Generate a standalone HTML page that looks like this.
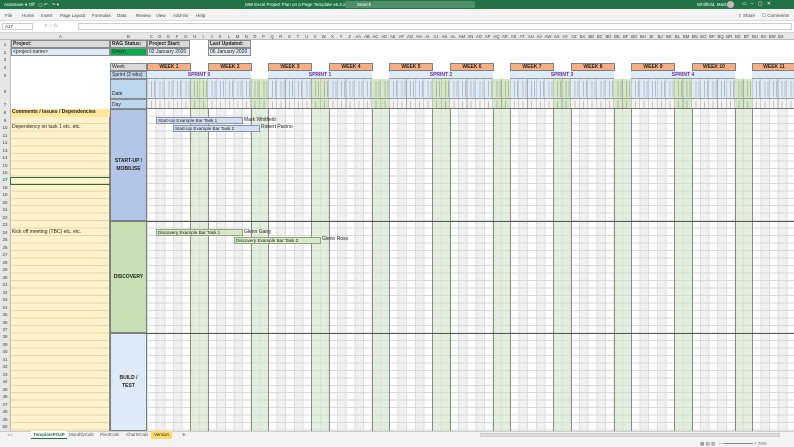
<!DOCTYPE html><html><head><style>
*{margin:0;padding:0;box-sizing:border-box}
body{width:794px;height:447px;overflow:hidden;background:#fff;font-family:"Liberation Sans",sans-serif;position:relative;font-size:5px;color:#222}
.a{position:absolute}
.title{left:0;top:0;width:794px;height:9px;background:#217346;color:#fff}
.menu{left:0;top:9px;width:794px;height:12px;background:#f3f3f3;border-bottom:1px solid #ddd}
.menu span{position:absolute;top:4px;font-size:4.5px;color:#444}
.fb{left:0;top:21px;width:794px;height:12px;background:#fff;border-bottom:1px solid #d4d4d4}
.colh{left:0;top:33px;width:794px;height:7px;background:#e6e6e6;border-bottom:1px solid #bbb}
.colh span{position:absolute;top:1px;font-size:4.5px;color:#444;text-align:center}
.rowh{left:0;top:40px;width:11px;height:391px;background:#e6e6e6;border-right:1px solid #bbb}
.rowh span{position:absolute;left:0;width:10px;text-align:center;font-size:4.5px;color:#444}
.grid{left:147px;top:109px;width:647px;height:322px;
background:
repeating-linear-gradient(180deg,transparent 0 6.48px,#d9d9d9 6.48px 7.48px),
repeating-linear-gradient(90deg,#dcdcdc 0 1px,transparent 1px 8.64px),
repeating-linear-gradient(90deg,#fff 0 8.64px,#f1f1f1 8.64px 17.28px,#fff 17.28px 25.92px,#f1f1f1 25.92px 34.56px,#fff 34.56px 43.2px,#e2efda 43.2px 60.48px)}
.wkline{top:109px;width:1px;height:322px;background:#8a8a8a}
.cell{font-size:5px;line-height:7px;padding-left:1px;white-space:nowrap;overflow:hidden}
.week{height:8px;background:#f4b084;border:1px solid #7f7f7f;font-weight:bold;font-size:5px;text-align:center;line-height:7px}
.spr{top:71px;height:8px;background:#ddebf7;color:#7030a0;font-weight:bold;font-size:5px;text-align:center;line-height:8px;border-bottom:1px solid #999}
.bar{height:7px;border:1px solid #8497b0;font-size:4.6px;line-height:5px;padding-left:1px;white-space:nowrap}
.sec{left:110px;width:37px;border:1px solid #7f7f7f;font-weight:bold;font-size:5px;text-align:center;display:flex;align-items:center;justify-content:center;line-height:8px}
</style></head><body>
<div class="a title"><span class="a" style="left:4px;top:2px;font-size:4.5px">AutoSave ● Off &nbsp; ▢ ↶ · ↷ ▾</span><span class="a" style="left:245px;top:2px;font-size:4.5px">MW Excel Project Plan on a Page Template v6.2.xlsm - Excel</span><span class="a" style="left:345px;top:1px;width:130px;height:7px;background:#4f8f69;border-radius:1px;font-size:4.5px;padding-left:12px;line-height:7px">Search</span><span class="a" style="left:697px;top:2px;font-size:4.5px">Whitfield, Mark</span><span class="a" style="left:727px;top:1px;width:7px;height:7px;border-radius:50%;background:#c9b6c0"></span><span class="a" style="left:742px;top:1px;font-size:5px">▭ &nbsp; – &nbsp; ▢ &nbsp; ✕</span></div>
<div class="a menu"><span style="left:5px">File</span><span style="left:22px">Home</span><span style="left:41px">Insert</span><span style="left:60px">Page Layout</span><span style="left:92px">Formulas</span><span style="left:117px">Data</span><span style="left:136px">Review</span><span style="left:156px">View</span><span style="left:173px">Add-ins</span><span style="left:196px">Help</span><span style="left:738px">⇪ Share</span><span style="left:762px">☐ Comments</span></div>
<div class="a fb"><span class="a" style="left:2px;top:2px;width:31px;height:7px;border:1px solid #ccc;font-size:4.5px;padding-left:2px">A17</span><span class="a" style="left:44px;top:2px;font-size:4.5px;color:#999">✕ ✓ <i>fx</i></span><span class="a" style="left:78px;top:2px;width:714px;height:7px;border:1px solid #ccc"></span></div>
<div class="a colh">
<span style="left:11px;width:99px">A</span><span style="left:110px;width:37px">B</span>
<span class="a" style="left:147px;width:640px;display:flex;position:absolute;top:1px"><span style="position:static;display:flex;font-size:4.3px;letter-spacing:0">
<b style="font-weight:normal;width:8.64px;text-align:center">C</b><b style="font-weight:normal;width:8.64px;text-align:center">D</b><b style="font-weight:normal;width:8.64px;text-align:center">E</b><b style="font-weight:normal;width:8.64px;text-align:center">F</b><b style="font-weight:normal;width:8.64px;text-align:center">G</b><b style="font-weight:normal;width:8.64px;text-align:center">H</b><b style="font-weight:normal;width:8.64px;text-align:center">I</b><b style="font-weight:normal;width:8.64px;text-align:center">J</b><b style="font-weight:normal;width:8.64px;text-align:center">K</b><b style="font-weight:normal;width:8.64px;text-align:center">L</b><b style="font-weight:normal;width:8.64px;text-align:center">M</b><b style="font-weight:normal;width:8.64px;text-align:center">N</b><b style="font-weight:normal;width:8.64px;text-align:center">O</b><b style="font-weight:normal;width:8.64px;text-align:center">P</b><b style="font-weight:normal;width:8.64px;text-align:center">Q</b><b style="font-weight:normal;width:8.64px;text-align:center">R</b><b style="font-weight:normal;width:8.64px;text-align:center">S</b><b style="font-weight:normal;width:8.64px;text-align:center">T</b><b style="font-weight:normal;width:8.64px;text-align:center">U</b><b style="font-weight:normal;width:8.64px;text-align:center">V</b><b style="font-weight:normal;width:8.64px;text-align:center">W</b><b style="font-weight:normal;width:8.64px;text-align:center">X</b><b style="font-weight:normal;width:8.64px;text-align:center">Y</b><b style="font-weight:normal;width:8.64px;text-align:center">Z</b><b style="font-weight:normal;width:8.64px;text-align:center">AA</b><b style="font-weight:normal;width:8.64px;text-align:center">AB</b><b style="font-weight:normal;width:8.64px;text-align:center">AC</b><b style="font-weight:normal;width:8.64px;text-align:center">AD</b><b style="font-weight:normal;width:8.64px;text-align:center">AE</b><b style="font-weight:normal;width:8.64px;text-align:center">AF</b><b style="font-weight:normal;width:8.64px;text-align:center">AG</b><b style="font-weight:normal;width:8.64px;text-align:center">AH</b><b style="font-weight:normal;width:8.64px;text-align:center">AI</b><b style="font-weight:normal;width:8.64px;text-align:center">AJ</b><b style="font-weight:normal;width:8.64px;text-align:center">AK</b><b style="font-weight:normal;width:8.64px;text-align:center">AL</b><b style="font-weight:normal;width:8.64px;text-align:center">AM</b><b style="font-weight:normal;width:8.64px;text-align:center">AN</b><b style="font-weight:normal;width:8.64px;text-align:center">AO</b><b style="font-weight:normal;width:8.64px;text-align:center">AP</b><b style="font-weight:normal;width:8.64px;text-align:center">AQ</b><b style="font-weight:normal;width:8.64px;text-align:center">AR</b><b style="font-weight:normal;width:8.64px;text-align:center">AS</b><b style="font-weight:normal;width:8.64px;text-align:center">AT</b><b style="font-weight:normal;width:8.64px;text-align:center">AU</b><b style="font-weight:normal;width:8.64px;text-align:center">AV</b><b style="font-weight:normal;width:8.64px;text-align:center">AW</b><b style="font-weight:normal;width:8.64px;text-align:center">AX</b><b style="font-weight:normal;width:8.64px;text-align:center">AY</b><b style="font-weight:normal;width:8.64px;text-align:center">AZ</b><b style="font-weight:normal;width:8.64px;text-align:center">BA</b><b style="font-weight:normal;width:8.64px;text-align:center">BB</b><b style="font-weight:normal;width:8.64px;text-align:center">BC</b><b style="font-weight:normal;width:8.64px;text-align:center">BD</b><b style="font-weight:normal;width:8.64px;text-align:center">BE</b><b style="font-weight:normal;width:8.64px;text-align:center">BF</b><b style="font-weight:normal;width:8.64px;text-align:center">BG</b><b style="font-weight:normal;width:8.64px;text-align:center">BH</b><b style="font-weight:normal;width:8.64px;text-align:center">BI</b><b style="font-weight:normal;width:8.64px;text-align:center">BJ</b><b style="font-weight:normal;width:8.64px;text-align:center">BK</b><b style="font-weight:normal;width:8.64px;text-align:center">BL</b><b style="font-weight:normal;width:8.64px;text-align:center">BM</b><b style="font-weight:normal;width:8.64px;text-align:center">BN</b><b style="font-weight:normal;width:8.64px;text-align:center">BO</b><b style="font-weight:normal;width:8.64px;text-align:center">BP</b><b style="font-weight:normal;width:8.64px;text-align:center">BQ</b><b style="font-weight:normal;width:8.64px;text-align:center">BR</b><b style="font-weight:normal;width:8.64px;text-align:center">BS</b><b style="font-weight:normal;width:8.64px;text-align:center">BT</b><b style="font-weight:normal;width:8.64px;text-align:center">BU</b><b style="font-weight:normal;width:8.64px;text-align:center">BV</b><b style="font-weight:normal;width:8.64px;text-align:center">BW</b><b style="font-weight:normal;width:8.64px;text-align:center">BX</b>
</span></span></div>
<div class="a rowh">
<span style="top:2px">1</span><span style="top:10px">2</span><span style="top:17px">3</span><span style="top:25px">4</span><span style="top:33px">5</span><span style="top:49px">6</span><span style="top:62px">7</span>
<span style="top:70px">8</span><span style="top:77.5px">9</span><span style="top:85px">10</span><span style="top:92.5px">11</span><span style="top:100px">12</span><span style="top:107.5px">13</span><span style="top:115px">14</span><span style="top:122.5px">15</span><span style="top:130px">16</span><span style="top:137.4px;color:#217346;font-weight:bold">17</span><span style="top:145px">18</span><span style="top:152.3px">19</span><span style="top:160px">20</span><span style="top:167.3px">21</span><span style="top:175px">22</span><span style="top:182.2px">23</span><span style="top:189.7px">24</span><span style="top:197.2px">25</span><span style="top:204.7px">26</span><span style="top:212.2px">27</span><span style="top:219.6px">28</span><span style="top:227px">29</span><span style="top:234.6px">30</span><span style="top:242px">31</span><span style="top:249.5px">32</span><span style="top:257px">33</span><span style="top:264.5px">34</span><span style="top:272px">35</span><span style="top:279.5px">36</span><span style="top:287px">37</span><span style="top:294.4px">38</span><span style="top:302px">39</span><span style="top:309.4px">40</span><span style="top:317px">41</span><span style="top:324.3px">42</span><span style="top:331.8px">43</span><span style="top:339.3px">44</span><span style="top:346.8px">45</span><span style="top:354.3px">46</span><span style="top:361.8px">47</span><span style="top:369.2px">48</span><span style="top:376.7px">49</span><span style="top:384.2px">50</span>
</div>
<div class="a cell" style="left:11px;top:40px;width:99px;height:8px;background:#d9d9d9;border:1px solid #8a8a8a;font-weight:bold">Project:</div>
<div class="a cell" style="left:11px;top:48px;width:99px;height:8px;background:#ddebf7;border:1px solid #8a8a8a">&lt;project-name&gt;</div>
<div class="a cell" style="left:110px;top:40px;width:37px;height:8px;background:#d9d9d9;border:1px solid #8a8a8a;font-weight:bold">RAG Status:</div>
<div class="a cell" style="left:110px;top:48px;width:37px;height:8px;background:#00b050;border:1px solid #8a8a8a">Green</div>
<div class="a cell" style="left:147px;top:40px;width:43px;height:8px;background:#d9d9d9;border:1px solid #8a8a8a;font-weight:bold">Project Start:</div>
<div class="a cell" style="left:147px;top:48px;width:43px;height:8px;background:#ddebf7;border:1px solid #8a8a8a">02 January 2020</div>
<div class="a cell" style="left:208px;top:40px;width:43px;height:8px;background:#d9d9d9;border:1px solid #8a8a8a;font-weight:bold">Last Updated:</div>
<div class="a cell" style="left:208px;top:48px;width:43px;height:8px;background:#ddebf7;border:1px solid #8a8a8a">06 January 2020</div>
<div class="a cell" style="left:110px;top:63px;width:37px;height:8px;background:#d9d9d9;border:1px solid #8a8a8a">Week</div>
<div class="a cell" style="left:110px;top:71px;width:37px;height:8px;background:#bdd7ee;border:1px solid #8a8a8a">Sprint (2 wks)</div>
<div class="a cell" style="left:110px;top:79px;width:37px;height:20px;background:#bdd7ee;border:1px solid #8a8a8a;padding-top:11px">Date</div>
<div class="a cell" style="left:110px;top:99px;width:37px;height:10px;background:#bdd7ee;border:1px solid #8a8a8a;padding-top:2px">Day</div>
<div class="a" style="left:147px;top:79px;width:647px;height:20px;background:repeating-linear-gradient(90deg,#aaa 0 0.6px,transparent 0.6px 8.64px),repeating-linear-gradient(90deg,#ddebf7 0 43.2px,#d4e8c6 43.2px 60.48px);border-bottom:1px solid #999"></div>
<div class="a" style="left:151px;top:81px;width:643px;height:16px;background:repeating-linear-gradient(90deg,#666 0 1px,transparent 1px 3px,#666 3px 4px,transparent 4px 8.64px);opacity:.35"></div>
<div class="a" style="left:147px;top:99px;width:647px;height:10px;background:repeating-linear-gradient(90deg,#aaa 0 0.6px,transparent 0.6px 8.64px),repeating-linear-gradient(90deg,#f2f2f2 0 43.2px,#d4e8c6 43.2px 60.48px);border-bottom:1px solid #777"></div>
<div class="a" style="left:151px;top:101px;width:643px;height:7px;background:repeating-linear-gradient(90deg,#666 0 1px,transparent 1px 8.64px);opacity:.35"></div>
<div class="a week" style="left:147px;top:63px;width:44px">WEEK 1</div>
<div class="a week" style="left:208px;top:63px;width:44px">WEEK 2</div>
<div class="a week" style="left:268px;top:63px;width:44px">WEEK 3</div>
<div class="a week" style="left:329px;top:63px;width:44px">WEEK 4</div>
<div class="a week" style="left:389px;top:63px;width:44px">WEEK 5</div>
<div class="a week" style="left:450px;top:63px;width:44px">WEEK 6</div>
<div class="a week" style="left:510px;top:63px;width:44px">WEEK 7</div>
<div class="a week" style="left:571px;top:63px;width:44px">WEEK 8</div>
<div class="a week" style="left:631px;top:63px;width:44px">WEEK 9</div>
<div class="a week" style="left:692px;top:63px;width:44px">WEEK 10</div>
<div class="a week" style="left:752px;top:63px;width:44px">WEEK 11</div>
<div class="a spr" style="left:147px;width:104px">SPRINT 0</div>
<div class="a spr" style="left:268px;width:104px">SPRINT 1</div>
<div class="a spr" style="left:389px;width:104px">SPRINT 2</div>
<div class="a spr" style="left:510px;width:104px">SPRINT 3</div>
<div class="a spr" style="left:631px;width:104px">SPRINT 4</div>
<div class="a spr" style="left:752px;width:42px"></div>
<div class="a" style="left:11px;top:109px;width:99px;height:322px;background:repeating-linear-gradient(180deg,#fff2cc 0 6.48px,#e4d9a6 6.48px 7.48px);border-right:1px solid #8a8a8a"></div>
<div class="a cell" style="left:11px;top:109px;width:99px;height:7.5px;background:#ffe699;font-weight:bold">Comments / Issues / Dependencies</div>
<div class="a cell" style="left:11px;top:124px;width:99px">Dependency on task 1 etc. etc.</div>
<div class="a cell" style="left:11px;top:228.5px;width:99px">Kick off meeting (TBC) etc. etc.</div>
<div class="a" style="left:10px;top:176.5px;width:101px;height:8.5px;border:1.5px solid #217346"></div>
<div class="a sec" style="top:109px;height:112px;background:#b4c6e7">START-UP /<br>MOBILISE</div>
<div class="a sec" style="top:221px;height:112px;background:#c6e0b4">DISCOVERY</div>
<div class="a sec" style="top:333px;height:98px;background:#ddebf7">BUILD /<br>TEST</div>
<div class="a grid"></div>
<div class="a wkline" style="left:190px"></div><div class="a wkline" style="left:208px"></div>
<div class="a wkline" style="left:251px"></div><div class="a wkline" style="left:268px"></div>
<div class="a wkline" style="left:311px"></div><div class="a wkline" style="left:329px"></div>
<div class="a wkline" style="left:372px"></div><div class="a wkline" style="left:389px"></div>
<div class="a wkline" style="left:432px"></div><div class="a wkline" style="left:450px"></div>
<div class="a wkline" style="left:493px"></div><div class="a wkline" style="left:510px"></div>
<div class="a wkline" style="left:553px"></div><div class="a wkline" style="left:571px"></div>
<div class="a wkline" style="left:614px"></div><div class="a wkline" style="left:631px"></div>
<div class="a wkline" style="left:674px"></div><div class="a wkline" style="left:692px"></div>
<div class="a wkline" style="left:735px"></div><div class="a wkline" style="left:752px"></div>
<div class="a" style="left:147px;top:220.5px;width:647px;height:1px;background:#555"></div>
<div class="a" style="left:147px;top:332.5px;width:647px;height:1px;background:#555"></div>
<div class="a bar" style="left:156px;top:117px;width:87px;background:#d6dff0">Start-Up Example Bar Task 1</div>
<div class="a cell" style="left:243px;top:116.5px">Mark Whitfield</div>
<div class="a bar" style="left:173px;top:124.5px;width:87px;background:#d6dff0">Start-Up Example Bar Task 2</div>
<div class="a cell" style="left:260px;top:124px">Robert Pacino</div>
<div class="a bar" style="left:156px;top:229px;width:87px;background:#d8e8cc;border-color:#8faa78">Discovery Example Bar Task 1</div>
<div class="a cell" style="left:243px;top:228.5px">Glenn Garry</div>
<div class="a bar" style="left:234px;top:236.5px;width:87px;background:#d8e8cc;border-color:#8faa78">Discovery Example Bar Task 2</div>
<div class="a cell" style="left:321px;top:236px">Glenn Ross</div>
<div class="a" style="left:0;top:431px;width:794px;height:9px;background:#f3f3f3;border-top:1px solid #ccc"></div>
<div class="a" style="left:7px;top:432px;font-size:4.5px;color:#aaa">◂ ▸</div>
<div class="a" style="left:31px;top:431px;width:36px;height:8px;background:#fff;color:#217346;font-weight:bold;font-size:4.5px;text-align:center;line-height:8px;border-bottom:1px solid #217346">TemplatePOaP</div>
<div class="a" style="left:69px;top:432px;font-size:4.5px;color:#555">MonthlyCals</div>
<div class="a" style="left:100px;top:432px;font-size:4.5px;color:#555">PivotCals</div>
<div class="a" style="left:126px;top:432px;font-size:4.5px;color:#555">ChartsCals</div>
<div class="a" style="left:151px;top:431px;width:21px;height:8px;background:#ffd966;font-size:4.5px;text-align:center;line-height:8px">Version</div>
<div class="a" style="left:182px;top:432px;font-size:4.5px;color:#777">⊕</div>
<div class="a" style="left:480px;top:433px;width:300px;height:4px;background:#ddd;border:1px solid #ccc"></div>
<div class="a" style="left:0;top:440px;width:794px;height:7px;background:#f3f3f3"></div>
<div class="a" style="left:700px;top:441px;font-size:4.5px;color:#666">▦ ▤ ▥ &nbsp; − ━━━━━━━━━━━ + 70%</div>
</body></html>
